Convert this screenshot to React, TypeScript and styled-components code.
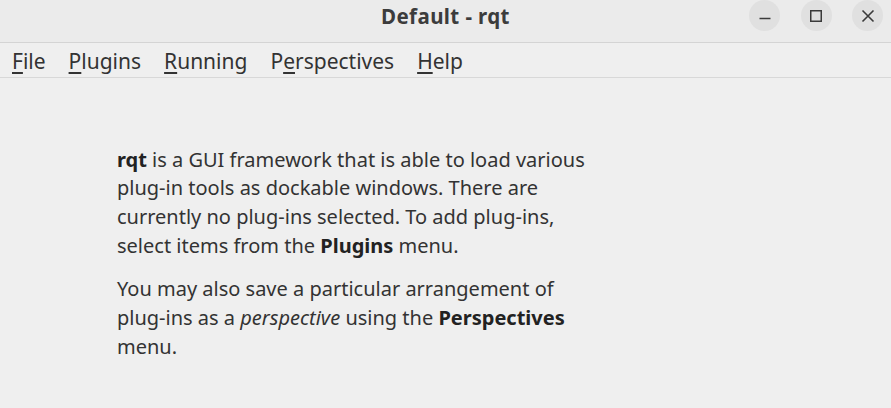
import * as React from 'react';
import styled, { createGlobalStyle } from 'styled-components';

const GlobalStyle = createGlobalStyle`
    html, body {
        margin: 0;
        padding: 0;
        background: #efefef;
    }
    body {
        font-family: 'Noto Sans', 'DejaVu Sans', sans-serif;
        color: #333333;
    }
`;

// [before, mnemonic, after]
const menus: Array<[string, string, string]> = [
    ['', 'F', 'ile'],
    ['', 'P', 'lugins'],
    ['', 'R', 'unning'],
    ['P', 'e', 'rspectives'],
    ['', 'H', 'elp'],
];

const MinimizeIcon = () => (
    <svg width={14} height={14} viewBox="0 0 14 14">
        <path d="M1.5 9.5h11" stroke="#3a3a3a" strokeWidth={1.5} />
    </svg>
);

const MaximizeIcon = () => (
    <svg width={14} height={14} viewBox="0 0 14 14">
        <rect x={1.75} y={1.75} width={10.5} height={10.5} fill="none" stroke="#3a3a3a" strokeWidth={1.5} />
    </svg>
);

const CloseIcon = () => (
    <svg width={14} height={14} viewBox="0 0 14 14">
        <path d="M1.5 1.5l11 11M12.5 1.5l-11 11" stroke="#3a3a3a" strokeWidth={1.6} />
    </svg>
);

export default function App() {
    return (
        <Window>
            <GlobalStyle />
            <TitleBar>
                <Title>Default - rqt</Title>
                <WindowButtons>
                    <WindowButton><MinimizeIcon /></WindowButton>
                    <WindowButton><MaximizeIcon /></WindowButton>
                    <WindowButton><CloseIcon /></WindowButton>
                </WindowButtons>
            </TitleBar>
            <MenuBar>
                {menus.map(([before, key, after], i) => (
                    <MenuItem key={i}>
                        {before}
                        <Mnemonic>{key}</Mnemonic>
                        {after}
                    </MenuItem>
                ))}
            </MenuBar>
            <Content>
                <Paragraph>
                    <b>rqt</b> is a GUI framework that is able to load various<br />
                    plug-in tools as dockable windows. There are<br />
                    currently no plug-ins selected. To add plug-ins,<br />
                    select items from the <b>Plugins</b> menu.
                </Paragraph>
                <Paragraph>
                    You may also save a particular arrangement of<br />
                    plug-ins as a <i>perspective</i> using the <b>Perspectives</b><br />
                    menu.
                </Paragraph>
            </Content>
        </Window>
    );
}

const Window = styled.div`
    width: 891px;
    height: 408px;
    overflow: hidden;
    display: flex;
    flex-direction: column;
    background: #efefef;
`;

const TitleBar = styled.div`
    position: relative;
    height: 43px;
    flex: none;
    box-sizing: border-box;
    padding-bottom: 11px;
    display: flex;
    align-items: center;
    justify-content: center;
    background: #ebebeb;
    border-bottom: 1px solid #d4d4d4;
`;

const Title = styled.div`
    font-size: 20.5px;
    letter-spacing: 0.4px;
    line-height: 32px;
    font-weight: 700;
    color: #3c3c3c;
`;

const WindowButtons = styled.div`
    position: absolute;
    right: 8px;
    top: 0;
    display: flex;
    gap: 20.5px;
`;

const WindowButton = styled.div`
    width: 31px;
    height: 31px;
    border-radius: 50%;
    background: #e0e0e0;
    display: flex;
    align-items: center;
    justify-content: center;
`;

const MenuBar = styled.div`
    height: 34px;
    flex: none;
    display: flex;
    align-items: center;
    padding-left: 0.5px;
    background: #efefef;
    border-bottom: 1px solid #d8d8d8;
`;

const MenuItem = styled.div`
    padding: 0 11.5px;
    font-size: 21px;
    line-height: 28px;
    margin-top: 1px;
    color: #333333;
    white-space: nowrap;
`;

const Mnemonic = styled.span`
    text-decoration: underline;
    text-decoration-thickness: 2px;
    text-underline-offset: 3px;
`;

const Content = styled.div`
    padding: 67.5px 0 0 117px;
    display: flex;
    flex-direction: column;
    gap: 15px;
`;

const Paragraph = styled.p`
    margin: 0;
    font-size: 20px;
    line-height: 28.7px;
    color: #333333;
    white-space: nowrap;
    b {
        color: #222222;
    }
`;
